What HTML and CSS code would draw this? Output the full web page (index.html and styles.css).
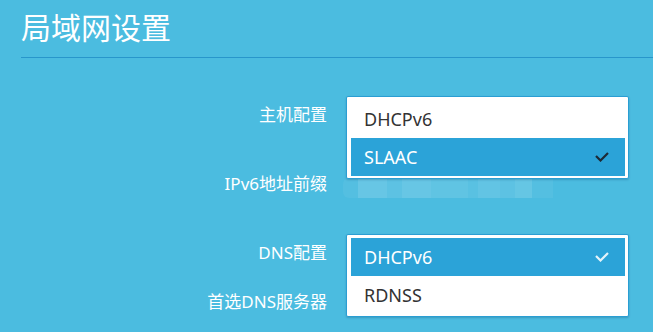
FILE: index.html
```html
<!DOCTYPE html>
<html lang="zh-CN">
<head>
<meta charset="utf-8">
<link rel="stylesheet" href="styles.css">
</head>
<body>
<div class="page">
  <header class="head"><h1 class="title">局域网设置</h1></header>
  <div class="form">
    <div class="row r1">
      <div class="label">主机配置</div>
      <div class="control">
        <ul class="menu">
          <li class="opt">DHCPv6</li>
          <li class="opt sel dark">SLAAC<svg class="chk" viewBox="0 0 14 10" width="14" height="10"><polyline points="1,4 5.5,8.5 13,1" fill="none" stroke="currentColor" stroke-width="2.2"/></svg></li>
        </ul>
      </div>
    </div>
    <div class="row r2">
      <div class="label">IPv6地址前缀</div>
      <div class="control">
        <div class="blur">
          <span class="b b1"></span><span class="b b2"></span><span class="b b3"></span><span class="b b2"></span><span class="b b4"></span><span class="b b5"></span><span class="b b6"></span><span class="b b3"></span><span class="b b7"></span><span class="b b8"></span>
        </div>
      </div>
    </div>
    <div class="row r3">
      <div class="label">DNS配置</div>
      <div class="control">
        <ul class="menu">
          <li class="opt sel light">DHCPv6<svg class="chk" viewBox="0 0 14 10" width="14" height="10"><polyline points="1,4 5.5,8.5 13,1" fill="none" stroke="currentColor" stroke-width="2.2"/></svg></li>
          <li class="opt">RDNSS</li>
        </ul>
      </div>
    </div>
    <div class="row r4">
      <div class="label">首选DNS服务器</div>
      <div class="control"></div>
    </div>
  </div>
</div>
</body>
</html>
```
FILE: styles.css
```css
html, body {
  margin: 0;
  padding: 0;
  background: #4bbce0;
  font-family: "Noto Sans", "Noto Sans CJK SC", sans-serif;
  color: #fff;
}
.page {
  width: 653px;
  height: 332px;
  overflow: hidden;
}
.head {
  margin-left: 21px;
  height: 57px;
  border-bottom: 1px solid #2896cb;
}
.title {
  margin: 0;
  padding-top: 8px;
  font-family: "Noto Sans CJK SC", sans-serif;
  font-weight: 400;
  font-size: 30px;
  line-height: 36px;
  letter-spacing: 0;
}
.form {
  display: flex;
  flex-direction: column;
  padding-top: 40px;
}
.row {
  display: flex;
  height: 34px;
  align-items: center;
}
.r1 { margin-bottom: 35px; }
.r2 { margin-bottom: 35px; }
.r3 { margin-bottom: 15px; }
.label {
  width: 327px;
  text-align: right;
  font-size: 17px;
  line-height: 34px;
  white-space: nowrap;
}
.control {
  position: relative;
  margin-left: 19px;
  width: 283px;
  height: 34px;
}
.menu {
  position: absolute;
  top: -2px;
  left: 0;
  z-index: 2;
  box-sizing: border-box;
  width: 283px;
  margin: 0;
  padding: 3px 3px 2px 4px;
  list-style: none;
  background: #fff;
  border: 1px solid #2a9ed3;
  border-radius: 2px;
  box-shadow: 0 1px 2px rgba(0, 60, 100, 0.25);
}
.opt {
  position: relative;
  height: 38px;
  line-height: 38px;
  padding-left: 13px;
  font-size: 18px;
  color: #333;
}
.opt.sel {
  background: #2ba3d8;
  color: #fff;
}
.chk {
  position: absolute;
  right: 16px;
  top: 14px;
}
.dark .chk { color: #1d2a36; }
.light .chk { color: #e4f3fa; }
.blur {
  position: absolute;
  top: 11px;
  left: -3px;
  display: flex;
  height: 20px;
}
.b { display: block; height: 20px; }
.b1 { width: 15px; background: rgba(255,255,255,0.05); border-radius: 6px 0 0 6px; }
.b2 { width: 29px; background: rgba(255,255,255,0.16); }
.b3 { width: 15px; background: rgba(255,255,255,0.1); }
.b4 { width: 37px; background: rgba(255,255,255,0.12); }
.b5 { width: 10px; background: rgba(255,255,255,0.08); }
.b6 { width: 22px; background: rgba(255,255,255,0.13); }
.b7 { width: 17px; background: rgba(255,255,255,0.15); }
.b8 { width: 21px; background: rgba(255,255,255,0.05); }
```
